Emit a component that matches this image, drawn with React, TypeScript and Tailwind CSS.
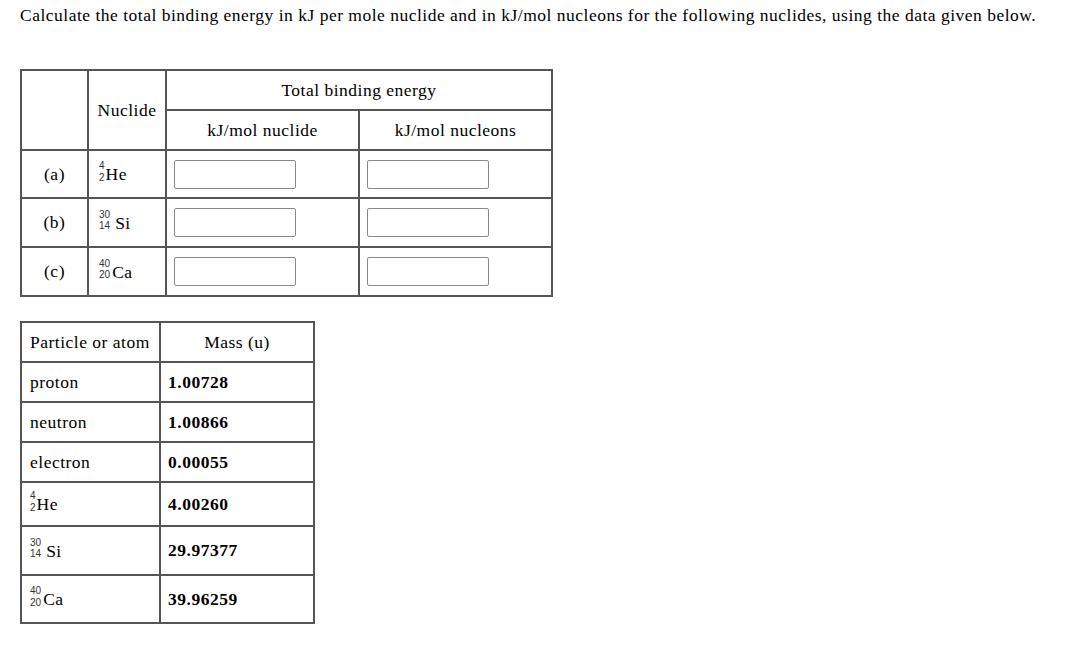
import React from "react";

type NuclideProps = {
  mass: string;
  atomic: string;
  symbol: string;
  gap?: string;
};

// stacked mass / atomic numbers in front of the element symbol
const Nuclide = ({ mass, atomic, symbol, gap = "ml-[1px]" }: NuclideProps) => {
  return (
    <span className="whitespace-nowrap">
      <span className="inline-flex flex-col items-end align-[11px] font-['Liberation_Sans',Arial,sans-serif] text-[10px] leading-[11.2px] tracking-normal text-[#333]">
        <span>{mass}</span>
        <span>{atomic}</span>
      </span>
      <span className={`${gap} inline-block`}>{symbol}</span>
    </span>
  );
};

const AnswerBox = () => (
  <input
    type="text"
    className="block h-[29px] w-[122px] rounded-[2px] border border-[#8a8a8a] bg-white"
  />
);

const cell = "border-2 border-[#555]";

const rows = [
  { label: "(a)", mass: "4", atomic: "2", symbol: "He", gap: "ml-[1px]", h: "h-[48px]" },
  { label: "(b)", mass: "30", atomic: "14", symbol: "Si", gap: "ml-[5px]", h: "h-[49px]" },
  { label: "(c)", mass: "40", atomic: "20", symbol: "Ca", gap: "ml-[2px]", h: "h-[49px]" },
];

const masses = [
  { name: "proton", value: "1.00728", h: "h-[40px]" },
  { name: "neutron", value: "1.00866", h: "h-[40px]" },
  { name: "electron", value: "0.00055", h: "h-[40px]" },
];

const atoms = [
  { mass: "4", atomic: "2", symbol: "He", gap: "ml-[1px]", value: "4.00260", h: "h-[44px]" },
  { mass: "30", atomic: "14", symbol: "Si", gap: "ml-[5px]", value: "29.97377", h: "h-[49px]" },
  { mass: "40", atomic: "20", symbol: "Ca", gap: "ml-[2px]", value: "39.96259", h: "h-[48px]" },
];

export default function App() {
  return (
    <div className="min-h-screen bg-white pl-[20px] pt-[5px] font-['Liberation_Serif','Times_New_Roman',serif] text-[17.5px] tracking-[0.5px] text-black">
      <p className="leading-[20px] whitespace-nowrap">
        Calculate the total binding energy in kJ per mole nuclide and in kJ/mol nucleons for the
        following nuclides, using the data given below.
      </p>

      <table className="mt-[44px] table-fixed border-collapse border-2 border-[#555]">
        <colgroup>
          <col className="w-[67px]" />
          <col className="w-[78px]" />
          <col className="w-[193px]" />
          <col className="w-[193px]" />
        </colgroup>
        <tbody>
          <tr className="h-[40px]">
            <td rowSpan={2} className={cell}></td>
            <td rowSpan={2} className={`${cell} text-center`}>
              Nuclide
            </td>
            <td colSpan={2} className={`${cell} text-center`}>
              Total binding energy
            </td>
          </tr>
          <tr className="h-[40px]">
            <td className={`${cell} text-center`}>kJ/mol nuclide</td>
            <td className={`${cell} text-center`}>kJ/mol nucleons</td>
          </tr>
          {rows.map((row) => (
            <tr key={row.label} className={row.h}>
              <td className={`${cell} text-center`}>{row.label}</td>
              <td className={`${cell} pl-[10px]`}>
                <Nuclide mass={row.mass} atomic={row.atomic} symbol={row.symbol} gap={row.gap} />
              </td>
              <td className={`${cell} pl-[7px]`}>
                <AnswerBox />
              </td>
              <td className={`${cell} pl-[7px]`}>
                <AnswerBox />
              </td>
            </tr>
          ))}
        </tbody>
      </table>

      <table className="mt-[24px] table-fixed border-collapse border-2 border-[#555]">
        <colgroup>
          <col className="w-[139px]" />
          <col className="w-[154px]" />
        </colgroup>
        <tbody>
          <tr className="h-[40px]">
            <td className={`${cell} pl-[8px]`}>Particle or atom</td>
            <td className={`${cell} text-center`}>Mass (u)</td>
          </tr>
          {masses.map((m) => (
            <tr key={m.name} className={m.h}>
              <td className={`${cell} pl-[8px]`}>{m.name}</td>
              <td className={`${cell} pl-[7px] font-bold`}>{m.value}</td>
            </tr>
          ))}
          {atoms.map((a) => (
            <tr key={a.symbol} className={a.h}>
              <td className={`${cell} pl-[8px]`}>
                <Nuclide mass={a.mass} atomic={a.atomic} symbol={a.symbol} gap={a.gap} />
              </td>
              <td className={`${cell} pl-[7px] font-bold`}>{a.value}</td>
            </tr>
          ))}
        </tbody>
      </table>
    </div>
  );
}
